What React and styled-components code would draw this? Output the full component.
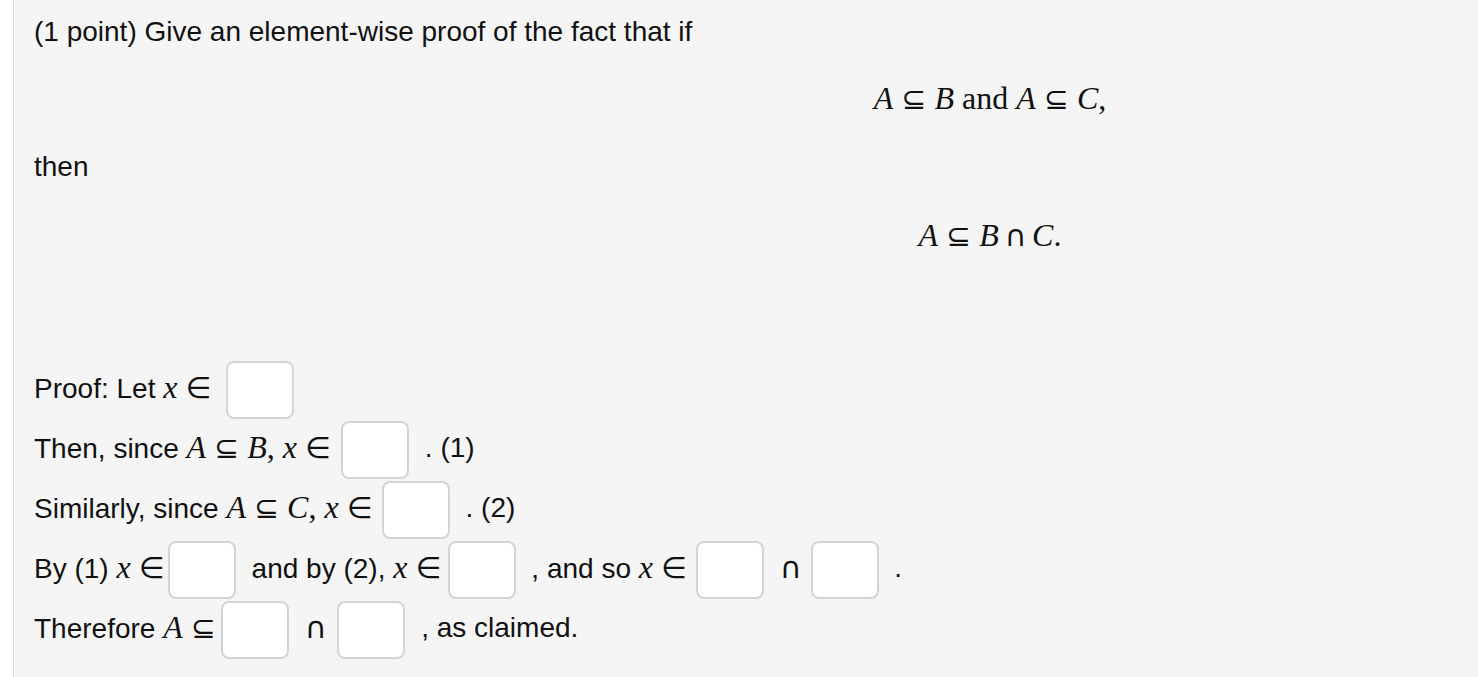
import styled, { createGlobalStyle } from "styled-components"

const GlobalStyle = createGlobalStyle`
  html, body {
    margin: 0;
    padding: 0;
    background: #fff;
    overflow: hidden;
  }
  body {
    font-family: "Liberation Sans", Arial, Helvetica, sans-serif;
    color: #111;
  }
`

const Panel = styled.div`
  box-sizing: border-box;
  width: 1954px;
  min-height: 700px;
  margin-left: 13px;
  padding: 15px 20px 20px;
  background: #f5f5f5;
  border-left: 1px solid #dcdcdc;
  border-right: 1px solid #dcdcdc;
  font-size: 28px;
`

const Para = styled.p`
  margin: ${(p) => p.mt || 0}px 0 0;
  line-height: 34px;
`

const Display = styled.div`
  height: 40px;
  margin-top: ${(p) => p.mt || 0}px;
  text-align: center;
  line-height: 40px;
  font-family: "Liberation Serif", "Times New Roman", "DejaVu Serif", serif;
  font-size: 32px;
`

const Math = styled.span`
  font-family: "Liberation Serif", "Times New Roman", "DejaVu Serif", serif;
  font-size: 32px;
  line-height: 1;
`

const V = styled.i`
  font-style: italic;
`

const Rel = styled.span`
  display: inline-block;
  margin: 0 ${(p) => (p.thin ? 0.2 : 0.28)}em;
  font-family: "DejaVu Sans", sans-serif;
  font-size: 0.92em;
  line-height: 0;
`

const Cap = styled.span`
  font-family: "DejaVu Sans", sans-serif;
  font-size: 30px;
`

const Rows = styled.div`
  margin-top: 105px;
`

const Row = styled.div`
  display: flex;
  align-items: flex-start;
  height: 60px;
`

const Seg = styled.span`
  height: 49px;
  padding-top: 11px;
  line-height: 34px;
  white-space: pre;
`

const Box = styled.input`
  box-sizing: border-box;
  flex: none;
  width: 68px;
  height: 58px;
  margin: 1px 8px 0 ${(p) => p.ml ?? 2}px;
  border: 2px solid #d4d4d4;
  border-radius: 8px;
  background: #fff;
  outline: none;
`

const Sub = () => <Rel>⊆</Rel>
const In = () => <Rel>∈</Rel>

export default function App() {
  return (
    <>
      <GlobalStyle />
      <Panel>
        <Para>(1 point) Give an element-wise proof of the fact that if</Para>
        <Display mt={29}>
          <V>A</V>
          <Sub />
          <V>B</V> and <V>A</V>
          <Sub />
          <V>C</V>,
        </Display>
        <Para mt={32}>then</Para>
        <Display mt={31}>
          <V>A</V>
          <Sub />
          <V>B</V>
          <Rel thin>∩</Rel>
          <V>C</V>.
        </Display>

        <Rows>
          <Row>
            <Seg>
              Proof: Let <Math><V>x</V><In /></Math>
            </Seg>
            <Box ml={6} />
          </Row>
          <Row>
            <Seg>
              Then, since <Math><V>A</V><Sub /><V>B</V>, <V>x</V><In /></Math>
            </Seg>
            <Box />
            <Seg> . (1)</Seg>
          </Row>
          <Row>
            <Seg>
              Similarly, since <Math><V>A</V><Sub /><V>C</V>, <V>x</V><In /></Math>
            </Seg>
            <Box ml={1} />
            <Seg> . (2)</Seg>
          </Row>
          <Row>
            <Seg>
              By (1) <Math><V>x</V><In /></Math>
            </Seg>
            <Box ml={-5} />
            <Seg>
              {" "}and by (2), <Math><V>x</V><In /></Math>
            </Seg>
            <Box ml={-2} />
            <Seg>
              {" "}, and so <Math><V>x</V><In /></Math>
            </Seg>
            <Box ml={1} />
            <Seg> <Cap>∩</Cap> </Seg>
            <Box ml={1} />
            <Seg> . </Seg>
          </Row>
          <Row>
            <Seg>
              Therefore <Math><V>A</V><Sub /></Math>
            </Seg>
            <Box ml={-3} />
            <Seg> <Cap>∩</Cap> </Seg>
            <Box ml={3} />
            <Seg> , as claimed.</Seg>
          </Row>
        </Rows>
      </Panel>
    </>
  )
}
